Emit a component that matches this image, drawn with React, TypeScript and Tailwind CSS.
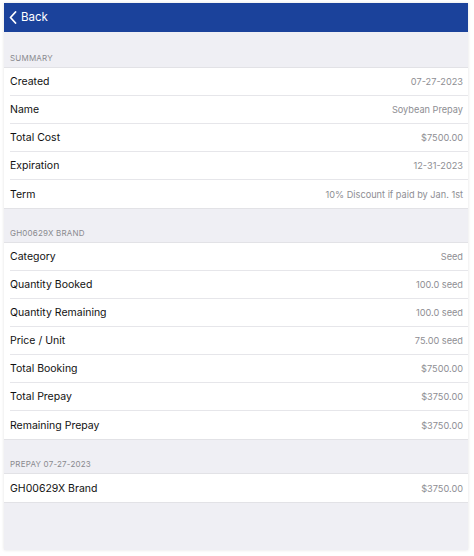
import React from "react";

type Row = { label: string; value: string };

const sections: { title: string; h: string; rows: Row[] }[] = [
  {
    title: "SUMMARY",
    h: "h-[35px]",
    rows: [
      { label: "Created", value: "07-27-2023" },
      { label: "Name", value: "Soybean Prepay" },
      { label: "Total Cost", value: "$7500.00" },
      { label: "Expiration", value: "12-31-2023" },
      { label: "Term", value: "10% Discount if paid by Jan. 1st" },
    ],
  },
  {
    title: "GH00629X BRAND",
    h: "h-[33px]",
    rows: [
      { label: "Category", value: "Seed" },
      { label: "Quantity Booked", value: "100.0 seed" },
      { label: "Quantity Remaining", value: "100.0 seed" },
      { label: "Price / Unit", value: "75.00 seed" },
      { label: "Total Booking", value: "$7500.00" },
      { label: "Total Prepay", value: "$3750.00" },
      { label: "Remaining Prepay", value: "$3750.00" },
    ],
  },
  {
    title: "PREPAY 07-27-2023",
    h: "h-[33px]",
    rows: [{ label: "GH00629X Brand", value: "$3750.00" }],
  },
];

export default function App() {
  return (
    <div
      className="w-[474px] h-[556px] bg-white pt-[3px] pl-[4px]"
      style={{ fontFamily: "Inter, 'Liberation Sans', sans-serif" }}
    >
      <div className="w-[464px] h-[547px] bg-[#efeff4] flex flex-col shadow-[0_0_3px_rgba(0,0,0,0.12)]">
        <div className="h-[29px] bg-[#1b429b] flex items-center pl-[5px] text-white">
          <svg width="8" height="13" viewBox="0 0 8 13" className="mr-[4px]">
            <path d="M6.5 1 L1.5 6.5 L6.5 12" fill="none" stroke="white" strokeWidth="1.8" strokeLinecap="round" strokeLinejoin="round" />
          </svg>
          <span className="text-[11.5px] leading-none">Back</span>
        </div>
        {sections.map((s) => (
          <div key={s.title}>
            <div
              className={`${s.h} flex items-end pl-[6px] pb-[3px] text-[8px] text-[#8a8a8f] tracking-[0.2px]`}
            >
              {s.title}
            </div>
            <div className="bg-white border-t border-b border-[#e2e2e6]">
              {s.rows.map((r, i) => (
                <div key={r.label} className="pl-[6px]">
                  <div
                    className={`h-[28px] flex items-center justify-between pr-[5px] pt-[1px] ${i < s.rows.length - 1 ? "border-b border-[#e6e6ea]" : ""}`}
                  >
                    <span className="text-[10.5px] text-[#111]">{r.label}</span>
                    <span className="text-[9.2px] text-[#8e8e93]">{r.value}</span>
                  </div>
                </div>
              ))}
            </div>
          </div>
        ))}
      </div>
    </div>
  );
}
